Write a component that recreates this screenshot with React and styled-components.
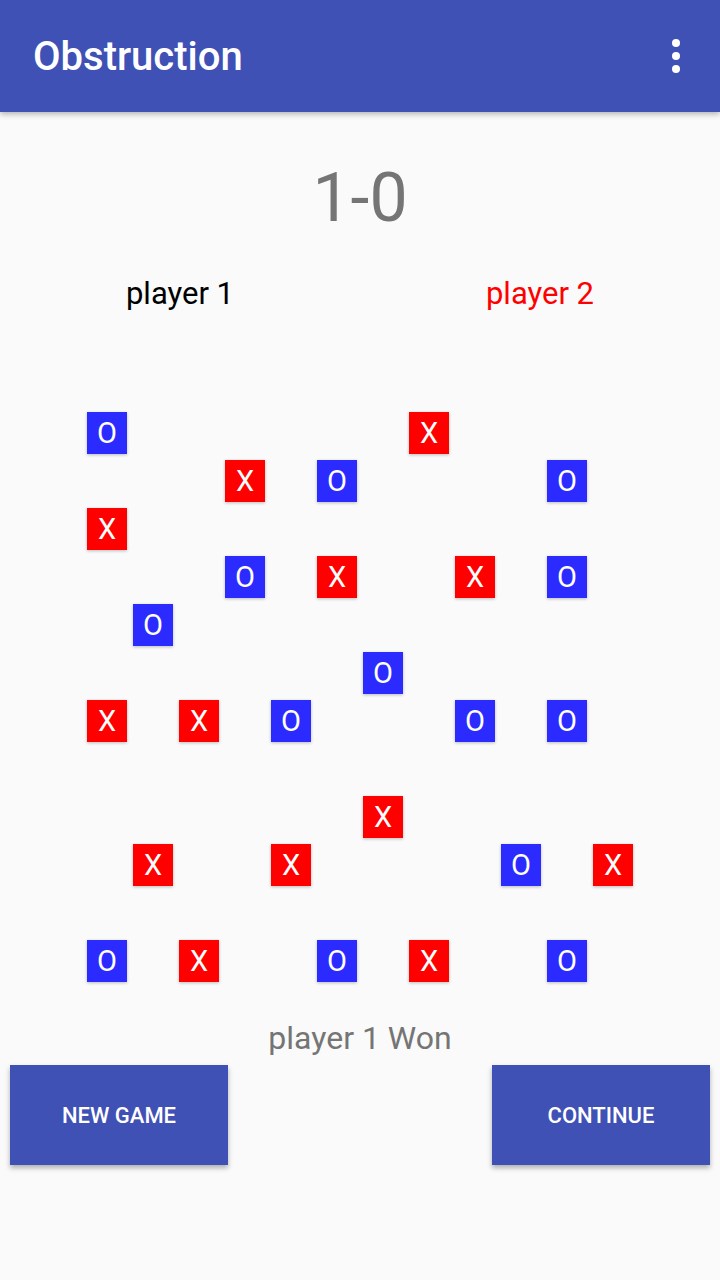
import React from "react";
import styled, { createGlobalStyle } from "styled-components";

const board = [
	"O......X....",
	"...X.O....O.",
	"X...........",
	"...O.X..X.O.",
	".O..........",
	"......O.....",
	"X.X.O...O.O.",
	"............",
	"......X.....",
	".X..X....O.X",
	"............",
	"O.X..O.X..O.",
];

export default function App() {
	return (
		<>
			<GlobalStyle />
			<Page>
				<AppBar>
					<Title>Obstruction</Title>
					<Overflow>
						<Dot />
						<Dot />
						<Dot />
					</Overflow>
				</AppBar>
				<Content>
					<Score>1-0</Score>
					<Players>
						<PlayerName>player 1</PlayerName>
						<PlayerName $active>player 2</PlayerName>
					</Players>
					<Board>
						{board.map((row, r) =>
							row.split("").map((c, i) =>
								c === "." ? (
									<Empty key={r + "-" + i} />
								) : (
									<Cell key={r + "-" + i} $mark={c}>
										{c}
									</Cell>
								)
							)
						)}
					</Board>
					<Status>player 1 Won</Status>
					<Actions>
						<ActionButton>NEW GAME</ActionButton>
						<ActionButton>CONTINUE</ActionButton>
					</Actions>
				</Content>
			</Page>
		</>
	);
}

const GlobalStyle = createGlobalStyle`
	html, body {
		margin: 0;
		padding: 0;
		background: #fafafa;
	}
	body {
		font-family: Roboto, "Noto Sans", sans-serif;
	}
`;
const Page = styled.div`
	width: 720px;
	min-height: 1280px;
	background: #fafafa;
`;
const AppBar = styled.header`
	height: 112px;
	background: #3f51b5;
	display: flex;
	align-items: center;
	justify-content: space-between;
	padding: 0 40px 0 33px;
	box-sizing: border-box;
	box-shadow: 0 2px 6px rgba(0, 0, 0, 0.3);
	position: relative;
`;
const Title = styled.h1`
	margin: 0;
	color: #fff;
	font-size: 40px;
	font-weight: 500;
`;
const Overflow = styled.div`
	display: flex;
	flex-direction: column;
	gap: 5px;
`;
const Dot = styled.span`
	width: 8px;
	height: 8px;
	border-radius: 50%;
	background: #fff;
`;
const Content = styled.main`
	display: flex;
	flex-direction: column;
	align-items: center;
`;
const Score = styled.div`
	margin-top: 46px;
	font-size: 68px;
	line-height: 80px;
	color: #757575;
`;
const Players = styled.div`
	width: 100%;
	display: grid;
	grid-template-columns: 1fr 1fr;
	margin-top: 36px;
`;
const PlayerName = styled.div`
	text-align: center;
	font-size: 31px;
	line-height: 40px;
	color: ${(p) => (p.$active ? "#ff0000" : "#000")};
`;
const Board = styled.div`
	display: grid;
	grid-template-columns: repeat(12, 40px);
	grid-auto-rows: 42px;
	column-gap: 6px;
	row-gap: 6px;
	margin-top: 98px;
`;
const Empty = styled.div``;
const Cell = styled.div`
	background: ${(p) => (p.$mark === "X" ? "#ff0000" : "#2b2bff")};
	color: #fff;
	font-size: 29px;
	display: flex;
	align-items: center;
	justify-content: center;
	box-shadow: 0 1px 3px rgba(0, 0, 0, 0.25);
`;
const Status = styled.div`
	margin-top: 36px;
	font-size: 32px;
	line-height: 40px;
	color: #757575;
`;
const Actions = styled.div`
	width: 100%;
	box-sizing: border-box;
	padding: 0 10px;
	margin-top: 7px;
	display: flex;
	justify-content: space-between;
`;
const ActionButton = styled.button`
	width: 218px;
	height: 100px;
	border: none;
	border-radius: 0;
	background: #3f51b5;
	color: #fff;
	font-family: Roboto, sans-serif;
	font-size: 22px;
	font-weight: 500;
	box-shadow: 0 3px 5px rgba(0, 0, 0, 0.3);
`;
